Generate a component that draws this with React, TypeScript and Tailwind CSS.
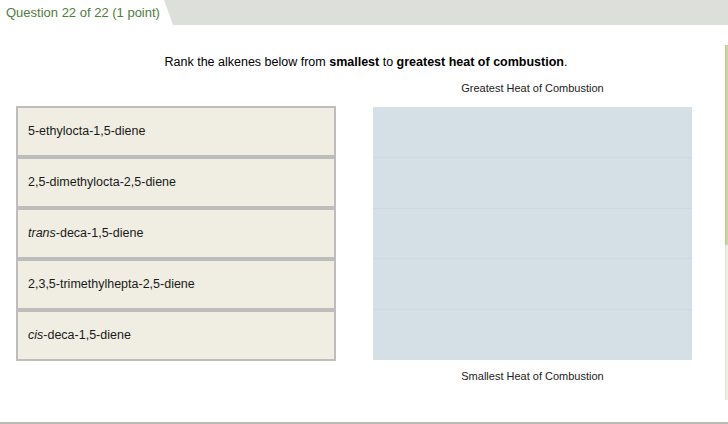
import React from 'react'

const items: { pre?: string; rest: string }[] = [
  { rest: '5-ethylocta-1,5-diene' },
  { rest: '2,5-dimethylocta-2,5-diene' },
  { pre: 'trans', rest: '-deca-1,5-diene' },
  { rest: '2,3,5-trimethylhepta-2,5-diene' },
  { pre: 'cis', rest: '-deca-1,5-diene' },
]

export default function App() {
  return (
    <div className="relative w-[728px] h-[424px] overflow-hidden bg-white font-['Liberation_Sans',Arial,sans-serif] text-[#222]">
      {/* header strip with question tab */}
      <div className="h-[25px] bg-[#dde0da] relative">
        <div className="h-full w-[173px] bg-white [clip-path:polygon(0_0,164px_0,173px_100%,0_100%)] flex items-center pl-[6px]">
          <span className="text-[13px] text-[#4f7d3c]">Question 22 of 22 (1 point)</span>
        </div>
      </div>

      <p className="mt-[29px] text-[12.5px] leading-[16px] text-center pl-[4px] text-black">
        Rank the alkenes below from <b>smallest</b> to <b>greatest heat of combustion</b>.
      </p>

      <div className="flex mt-[11px] pl-[16px] gap-[37px]">
        <div className="w-[320px] mt-[25px] flex flex-col">
          {items.map((it, i) => (
            <div
              key={i}
              className="h-[51px] border-2 border-[#bdbdbb] bg-[#f0eee3] flex items-center pl-[10px] text-[12.5px] text-[#1a1a1a]"
            >
              {it.pre && <i>{it.pre}</i>}
              {it.rest}
            </div>
          ))}
        </div>

        <div className="w-[319px] flex flex-col">
          <div className="mt-[1px] h-[13px] text-[11px] leading-[13px] text-center text-[#222]">Greatest Heat of Combustion</div>
          <div className="mt-[12px] h-[253px] bg-[#d5dfe6] flex flex-col">
            {[0, 1, 2, 3, 4].map((r) => (
              <div key={r} className={r < 4 ? 'flex-1 border-b border-[#cdd9e3]' : 'flex-1'} />
            ))}
          </div>
          <div className="mt-[10px] text-[11px] leading-[13px] text-center text-[#222]">Smallest Heat of Combustion</div>
        </div>
      </div>

      {/* panel edge peeking in on the right */}
      <div className="absolute left-[725px] top-[45px] w-[3px] h-[355px] flex flex-col">
        <div className="h-[200px] bg-[#c9d89a] border-l border-[#b9cc7c]" />
        <div className="flex-1 bg-[#eef0e2] border-l border-[#dfe3cc]" />
      </div>

      <div className="absolute left-0 right-0 bottom-0 h-[2px] bg-[#b7bbb3]" />
    </div>
  )
}
